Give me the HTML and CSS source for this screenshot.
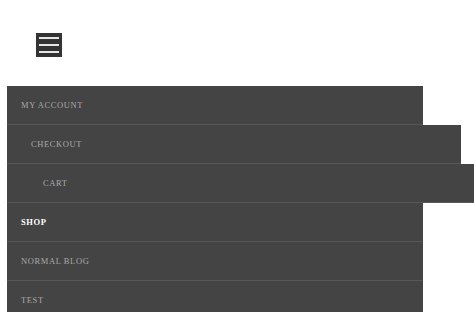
FILE: index.html
```html
<!DOCTYPE html>
<html>
<head>
<meta charset="utf-8">
<link rel="stylesheet" href="styles.css">
</head>
<body>
<header class="top">
  <button class="burger" aria-label="Menu">
    <span class="bar"></span><span class="bar"></span><span class="bar"></span>
  </button>
</header>
<nav class="menu">
  <a class="item lvl0">My Account</a>
  <a class="item lvl1">Checkout</a>
  <a class="item lvl2">Cart</a>
  <a class="item lvl0 active">Shop</a>
  <a class="item lvl0">Normal Blog</a>
  <a class="item lvl0">Test</a>
</nav>
</body>
</html>
```
FILE: styles.css
```css
html, body {
  margin: 0;
  padding: 0;
  background: #fff;
  overflow: hidden;
}
body {
  width: 474px;
  height: 312px;
  font-family: "Liberation Serif", "DejaVu Serif", serif;
}
.top {
  height: 86px;
  padding-left: 36px;
  padding-top: 33px;
  box-sizing: border-box;
}
.burger {
  display: flex;
  flex-direction: column;
  justify-content: center;
  gap: 5px;
  width: 26px;
  height: 24px;
  padding: 0 3px;
  margin: 0;
  border: 0;
  background: #333;
  box-sizing: border-box;
}
.bar {
  display: block;
  height: 2px;
  background: #e6e6e6;
}
.menu {
  display: flex;
  flex-direction: column;
  margin-left: 7px;
}
.item {
  display: flex;
  align-items: center;
  height: 39px;
  box-sizing: border-box;
  border-bottom: 1px solid #575757;
  background: #444;
  color: #a9a9a9;
  font-size: 8.5px;
  letter-spacing: 0.6px;
  text-transform: uppercase;
  text-decoration: none;
  white-space: nowrap;
}
.lvl0 { width: 416px; padding-left: 14px; }
.lvl1 { width: 454px; padding-left: 24px; }
.lvl2 { width: 467px; padding-left: 36px; }
.active {
  color: #fff;
  font-weight: bold;
}
```
